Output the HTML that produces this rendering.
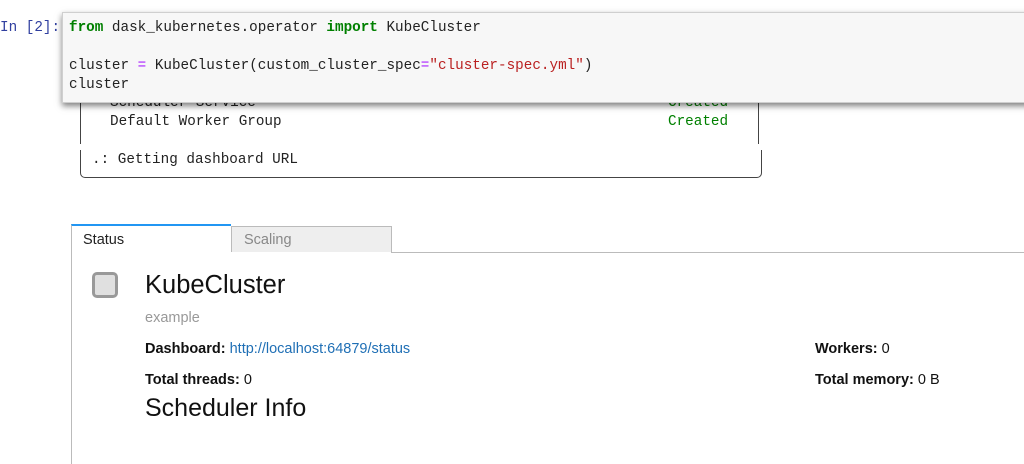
<!DOCTYPE html>
<html><head><meta charset="utf-8"><style>
body{margin:0;width:1024px;height:462px;overflow:hidden;background:#fff;position:relative;font-family:"Liberation Sans",sans-serif}
.mono{font-family:"Liberation Mono","DejaVu Sans Mono",monospace;font-size:14.3px;white-space:pre;position:absolute;line-height:19px}
.a{position:absolute}
.t{font-size:14.5px;color:#111}
</style></head><body>
<!-- output box -->
<div class="a" style="left:80px;top:94px;width:677px;height:50px;border-left:1px solid #444;border-right:1px solid #444"></div>
<div class="a" style="left:80px;top:150px;width:680px;height:27px;border-left:1px solid #444;border-right:1px solid #444;border-bottom:1px solid #444;border-radius:0 0 5px 5px"></div>
<div class="mono" style="left:110px;top:94px;color:#222">Scheduler Service</div>
<div class="mono" style="left:668px;top:94px;color:#008000">Created</div>
<div class="mono" style="left:110px;top:113px;color:#222">Default Worker Group</div>
<div class="mono" style="left:668px;top:113px;color:#008000">Created</div>
<div class="mono" style="left:92px;top:151px;color:#222">.: Getting dashboard URL</div>
<!-- code cell -->
<div class="mono" style="left:0;top:19px;color:#303f9f">In [2]:</div>
<div class="a" style="left:62px;top:12px;width:970px;height:89px;background:#f7f7f7;border:1px solid #cfcfcf;border-right:none;box-shadow:0 3px 6px rgba(0,0,0,0.5)"></div>
<div class="mono" style="left:69px;top:19px;color:#222"><span style="color:#008000;font-weight:bold">from</span> dask_kubernetes.operator <span style="color:#008000;font-weight:bold">import</span> KubeCluster

cluster <span style="color:#aa22ff">=</span> KubeCluster(custom_cluster_spec<span style="color:#aa22ff">=</span><span style="color:#ba2121">"cluster-spec.yml"</span>)
cluster</div>
<!-- tabs -->
<div class="a" style="left:231px;top:226px;height:26px;background:#eee;border:1px solid #bbb;border-bottom:none;color:#888;font-size:14.5px;line-height:27px;padding-left:12px;box-sizing:border-box;width:161px">Scaling</div>
<div class="a" style="left:391px;top:252px;width:640px;border-top:1px solid #bbb"></div>
<div class="a" style="left:71px;top:224px;width:160px;height:240px;border-left:1px solid #bbb;border-top:2px solid #2196f3;box-sizing:border-box"></div>
<div class="a t" style="left:83px;top:232px;color:#222">Status</div>
<div class="a" style="left:92px;top:272px;width:26px;height:26px;box-sizing:border-box;border:3px solid #999;border-radius:5px;background:#e0e0e0"></div>
<div class="a" style="left:145px;top:271px;font-size:25.5px;color:#111">KubeCluster</div>
<div class="a" style="left:145px;top:310px;font-size:14.5px;color:#999">example</div>
<div class="a t" style="left:145px;top:341px"><b>Dashboard:</b> <span style="color:#1f6fb5">http://localhost:64879/status</span></div>
<div class="a t" style="left:815px;top:341px"><b>Workers:</b> 0</div>
<div class="a t" style="left:145px;top:372px"><b>Total threads:</b> 0</div>
<div class="a t" style="left:815px;top:372px"><b>Total memory:</b> 0 B</div>
<div class="a" style="left:145px;top:394px;font-size:25px;color:#111">Scheduler Info</div>
</body></html>
